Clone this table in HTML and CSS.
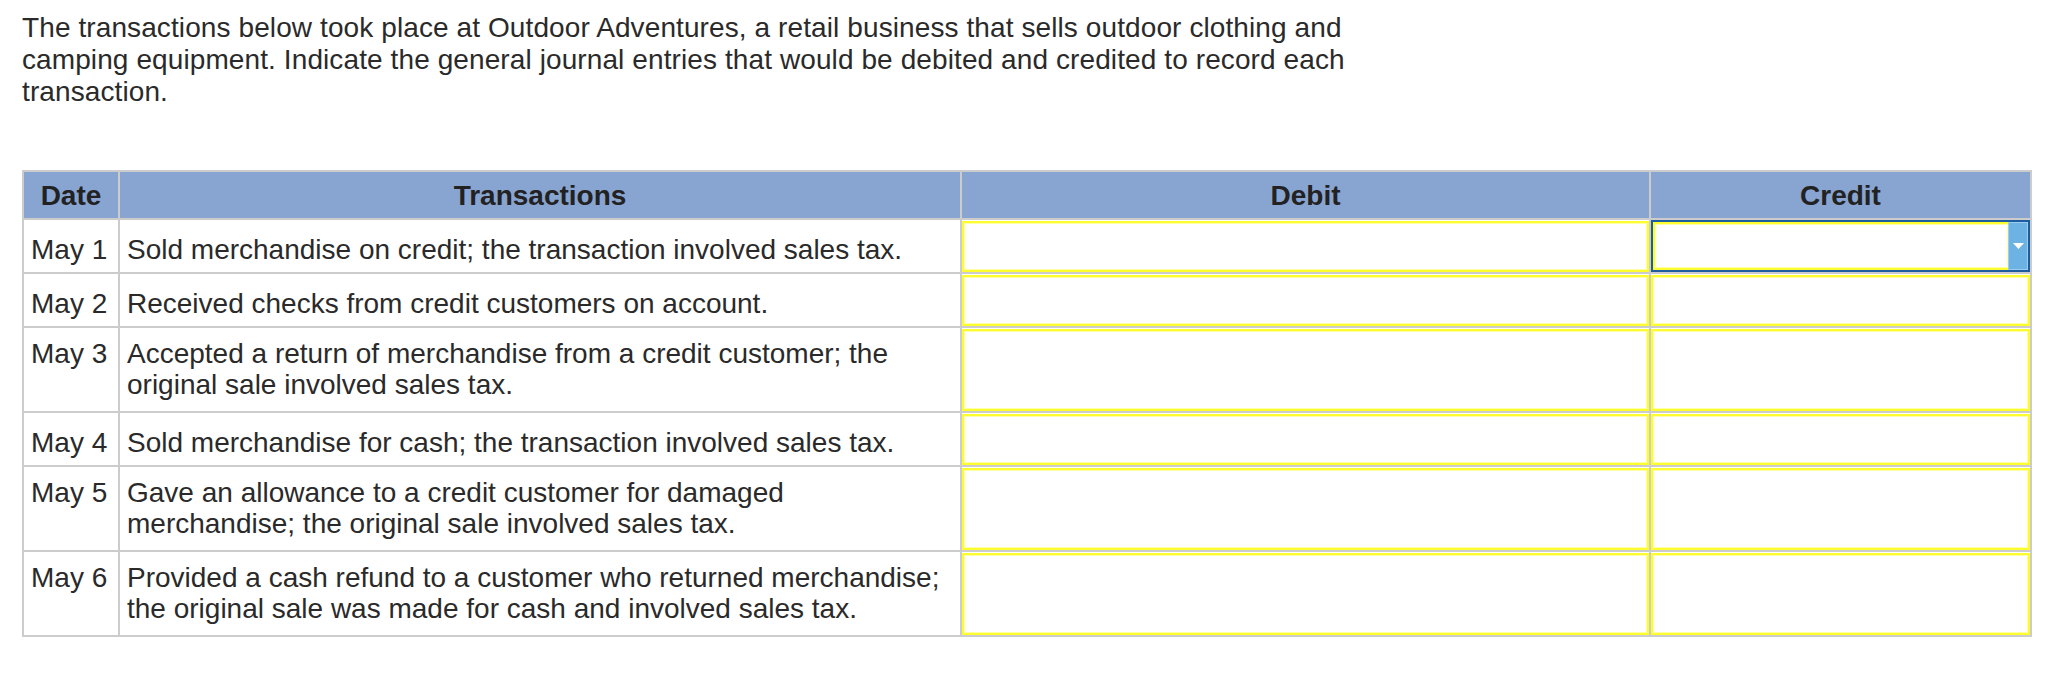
FILE: index.html
```html
<!DOCTYPE html>
<html lang="en">
<head>
<meta charset="utf-8">
<title>Outdoor Adventures – Journal Entries</title>
<link rel="stylesheet" href="styles.css">
</head>
<body>
<main class="page">
  <p class="intro">The transactions below took place at Outdoor Adventures, a retail business that sells outdoor clothing and camping equipment. Indicate the general journal entries that would be debited and credited to record each transaction.</p>

  <div class="journal" role="table">
    <div class="cell head" role="columnheader">Date</div>
    <div class="cell head" role="columnheader">Transactions</div>
    <div class="cell head" role="columnheader">Debit</div>
    <div class="cell head" role="columnheader">Credit</div>

    <div class="cell date single">May 1</div>
    <div class="cell text single">Sold merchandise on credit; the transaction involved sales tax.</div>
    <div class="cell entry"><div class="field"></div></div>
    <div class="cell entry">
      <div class="select">
        <div class="select-field"></div>
        <div class="select-arrow"><svg width="11" height="6" viewBox="0 0 11 6"><path d="M0 0H11L5.5 6Z" fill="#ffffff"/></svg></div>
      </div>
    </div>

    <div class="cell date single">May 2</div>
    <div class="cell text single">Received checks from credit customers on account.</div>
    <div class="cell entry"><div class="field"></div></div>
    <div class="cell entry"><div class="field"></div></div>

    <div class="cell date">May 3</div>
    <div class="cell text">Accepted a return of merchandise from a credit customer; the<br>original sale involved sales tax.</div>
    <div class="cell entry"><div class="field"></div></div>
    <div class="cell entry"><div class="field"></div></div>

    <div class="cell date single">May 4</div>
    <div class="cell text single">Sold merchandise for cash; the transaction involved sales tax.</div>
    <div class="cell entry"><div class="field"></div></div>
    <div class="cell entry"><div class="field"></div></div>

    <div class="cell date">May 5</div>
    <div class="cell text">Gave an allowance to a credit customer for damaged<br>merchandise; the original sale involved sales tax.</div>
    <div class="cell entry"><div class="field"></div></div>
    <div class="cell entry"><div class="field"></div></div>

    <div class="cell date">May 6</div>
    <div class="cell text">Provided a cash refund to a customer who returned merchandise;<br>the original sale was made for cash and involved sales tax.</div>
    <div class="cell entry"><div class="field"></div></div>
    <div class="cell entry"><div class="field"></div></div>
  </div>
</main>
</body>
</html>
```

FILE: styles.css
```css
html, body {
  margin: 0;
  padding: 0;
  background: #ffffff;
}

.page {
  padding: 12px 0 0 22px;
  font-family: "Liberation Sans", Arial, Helvetica, sans-serif;
  color: #2a2a2a;
}

.intro {
  margin: 0;
  width: 1400px;
  font-size: 28px;
  line-height: 32px;
  letter-spacing: 0.1px;
}

.journal {
  margin-top: 62px;
  width: 2010px;
  box-sizing: border-box;
  display: grid;
  grid-template-columns: 94px 840px 687px 379px;
  gap: 2px;
  background: #cccccc;
  border: 2px solid #cccccc;
  font-size: 28px;
  line-height: 31px;
}

.cell {
  background: #ffffff;
}

.head {
  background: #88a5d2;
  font-weight: bold;
  text-align: center;
  color: #222222;
  padding: 8px 6px 7px;
}

.date,
.text {
  padding: 10px 6px 11px 7px;
}

.date.single,
.text.single {
  padding-top: 14px;
  padding-bottom: 7px;
}

.date {
  white-space: nowrap;
}

.entry {
  padding: 1px 0 0 0;
  display: flex;
}

.field {
  flex: 1;
  border: 2px solid #fcfc2e;
  box-shadow: inset 0 0 0 1px #ffffa8;
}

.select {
  flex: 1;
  display: flex;
  margin-top: -1px;
  border: 2px solid #1d5c9e;
}

.select-field {
  flex: 1;
  border: 2px solid #fcfc2e;
  border-right: none;
  box-shadow: inset 0 0 0 1px #ffffa8;
}

.select-arrow {
  width: 18px;
  background: #6cb3e4;
  border: 1px solid #9ccdf0;
  display: flex;
  align-items: center;
  justify-content: center;
}
```
